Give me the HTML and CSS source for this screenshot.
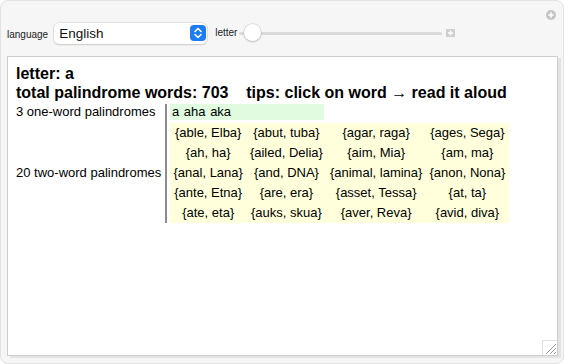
FILE: index.html
```html
<!DOCTYPE html>
<html>
<head>
<meta charset="utf-8">
<link rel="stylesheet" href="styles.css">
</head>
<body>
<div class="frame">
  <div class="corner-plus"><svg width="10" height="10" viewBox="0 0 10 10"><circle cx="5" cy="5" r="5" fill="#c4c4c4"/><path d="M5 2.3v5.4M2.3 5h5.4" stroke="#fff" stroke-width="1.6"/></svg></div>
  <div class="controls">
    <span class="lbl">language</span>
    <div class="popup">
      <span class="popup-text">English</span>
      <span class="stepper"><svg width="16" height="16" viewBox="0 0 16 16"><path d="M5 6.5 8 3.5 11 6.5M5 9.5 8 12.5 11 9.5" fill="none" stroke="#fff" stroke-width="1.6" stroke-linecap="round" stroke-linejoin="round"/></svg></span>
    </div>
    <span class="lbl lbl-letter">letter</span>
    <div class="slider">
      <div class="track"></div>
      <div class="knob"></div>
    </div>
    <span class="plus-box"><svg width="9" height="8" viewBox="0 0 9 8"><rect width="9" height="8" fill="#cfcfcf"/><path d="M4.5 1.5v5M2 4h5" stroke="#fff" stroke-width="1.4"/></svg></span>
  </div>
  <div class="panel">
    <div class="head">letter: a<br>total palindrome words: 703&nbsp;&nbsp;&nbsp;&nbsp;tips: click on word → read it aloud</div>
    <div class="res">
      <div class="label">3 one-word palindromes</div>
      <div class="content first"><div class="one">a aha aka</div></div>
      <div class="label middle">20 two-word palindromes</div>
      <div class="content">
        <table class="two">
          <tr><td>{able, Elba}</td><td>{abut, tuba}</td><td>{agar, raga}</td><td>{ages, Sega}</td></tr>
          <tr><td>{ah, ha}</td><td>{ailed, Delia}</td><td>{aim, Mia}</td><td>{am, ma}</td></tr>
          <tr><td>{anal, Lana}</td><td>{and, DNA}</td><td>{animal, lamina}</td><td>{anon, Nona}</td></tr>
          <tr><td>{ante, Etna}</td><td>{are, era}</td><td>{asset, Tessa}</td><td>{at, ta}</td></tr>
          <tr><td>{ate, eta}</td><td>{auks, skua}</td><td>{aver, Reva}</td><td>{avid, diva}</td></tr>
        </table>
      </div>
    </div>
    <div class="grip"><svg width="14" height="14" viewBox="0 0 14 14"><path d="M13 3 3 13M13 7 7 13M13 11 11 13" stroke="#9a9a9a" stroke-width="1"/></svg></div>
  </div>
</div>
</body>
</html>
```
FILE: styles.css
```css
html, body {
  margin: 0;
  padding: 0;
  background: #ffffff;
}
.frame {
  position: relative;
  box-sizing: border-box;
  width: 564px;
  height: 364px;
  background: #f6f6f6;
  border: 1px solid #e2e2e2;
  border-radius: 8px;
  padding: 21px 0 0 6px;
  font-family: "Liberation Sans", Arial, sans-serif;
}
.corner-plus {
  position: absolute;
  top: 9px;
  right: 7px;
  line-height: 0;
}
.controls {
  display: flex;
  align-items: center;
  height: 22px;
}
.lbl {
  font-size: 10px;
  color: #222;
  margin-top: 3px;
}
.lbl-letter {
  margin-top: 0;
  margin-left: 8px;
  margin-bottom: 1px;
}
.popup {
  box-sizing: border-box;
  margin-left: 6px;
  width: 153px;
  height: 21px;
  background: #fff;
  border-radius: 5px;
  box-shadow: 0 0 0 0.5px #d0d0d0, 0 1px 1.5px rgba(0,0,0,0.18);
  display: flex;
  align-items: center;
  justify-content: space-between;
  padding: 0 1px 0 5px;
}
.popup-text {
  font-size: 13.5px;
  color: #111;
}
.stepper {
  width: 16px;
  height: 16px;
  background: #1e7cf4;
  border-radius: 4px;
  line-height: 0;
}
.slider {
  position: relative;
  margin-left: 2px;
  width: 203px;
  height: 18px;
  margin-bottom: 1px;
}
.track {
  position: absolute;
  left: 0;
  right: 0;
  top: 8px;
  height: 3px;
  border-radius: 2px;
  background: #dadada;
}
.knob {
  position: absolute;
  left: 5px;
  top: 0;
  width: 17px;
  height: 17px;
  border-radius: 50%;
  background: #fff;
  box-shadow: 0 0 0 0.5px #c8c8c8, 0 1px 2px rgba(0,0,0,0.25);
}
.plus-box {
  margin-left: 4px;
  line-height: 0;
  margin-bottom: 1px;
}
.panel {
  position: relative;
  box-sizing: border-box;
  margin-top: 12px;
  width: 551px;
  height: 300px;
  background: #fff;
  border: 1px solid #cdcdcd;
  box-shadow: 3px 2px 0 #e3e3e3;
  padding: 8px 0 0 8px;
}
.head {
  font-weight: bold;
  font-size: 16px;
  line-height: 18.5px;
  color: #000;
}
.res {
  display: grid;
  grid-template-columns: 149px auto;
  margin-top: 2px;
  font-size: 13px;
  color: #000;
  justify-content: start;
}
.label {
  line-height: 16px;
}
.label.middle {
  align-self: center;
}
.content {
  border-left: 2px solid #8c8c8c;
  padding-left: 3px;
}
.content.first {
  padding-bottom: 3px;
}
.one {
  width: 152px;
  height: 16px;
  line-height: 16px;
  background: #e0fbe0;
  padding-left: 2px;
  word-spacing: 1px;
}
.two {
  border-collapse: collapse;
  background: #ffffdb;
}
.two td {
  height: 20px;
  padding: 0 3.5px;
  text-align: center;
  white-space: nowrap;
  line-height: 20px;
}
.grip {
  position: absolute;
  right: 0;
  bottom: 0;
  width: 14px;
  height: 14px;
  border-left: 1px solid #e0e0e0;
  border-top: 1px solid #e0e0e0;
  line-height: 0;
}
```
